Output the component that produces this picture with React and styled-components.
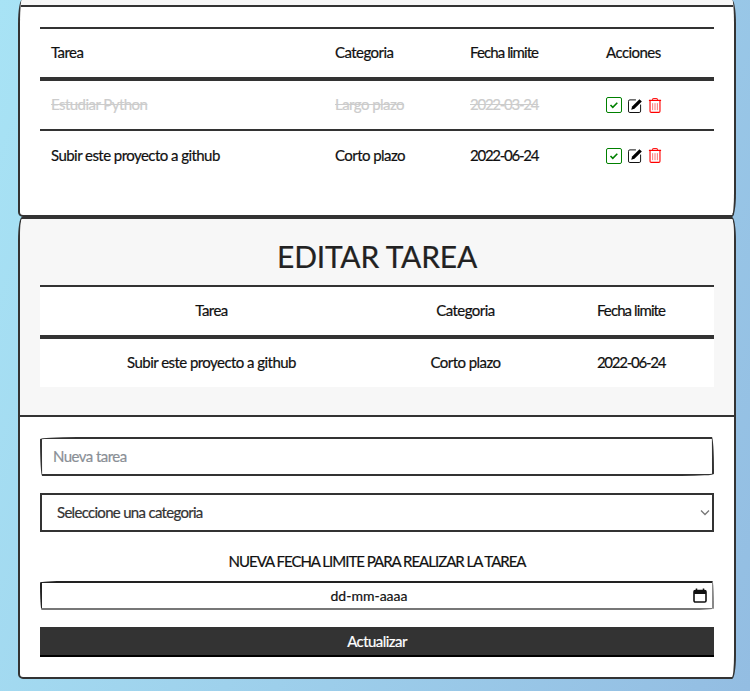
import React from "react";
import styled, { createGlobalStyle } from "styled-components";

const wobble = "255px 15px 225px 15px / 15px 225px 15px 255px";

const GlobalStyle = createGlobalStyle`
  html, body {
    margin: 0;
    height: 691px;
    overflow: hidden;
  }
  body {
    background: linear-gradient(110deg, #a8e3f5 0%, #93bde2 100%);
    font-family: "Lato", "Liberation Sans", sans-serif;
    font-size: 15px;
    letter-spacing: -0.55px;
    -webkit-text-stroke: 0.2px;
    color: #111;
  }
`;

const Page = styled.div`
  width: 718px;
  margin: 0 14px 0 18px;
`;

const Card = styled.section`
  background: #fff;
  border: 2px solid #333;
  border-top: ${(p) => (p.$flushTop ? "none" : "2px solid #333")};
  border-radius: 4px 4px 4px 5px / 24px 24px 24px 5px;
  box-sizing: border-box;
  overflow: hidden;
`;

const CardTop = styled.div`
  height: 5px;
  background: #f7f7f7;
  border-bottom: 2px solid #333;
`;

const CardHead = styled.div`
  background: #f7f7f7;
  padding: 13px 20px 28px;
  border-bottom: 2px solid #333;
`;

const Title = styled.h2`
  margin: 0 0 5px;
  font-size: 30px;
  font-weight: 400;
  letter-spacing: -0.2px;
  line-height: 48px;
  color: #222;
  text-align: center;
`;

const Body = styled.div`
  padding: 20px 20px 35px;
`;

const Table = styled.table`
  width: 100%;
  border-collapse: collapse;
  background: #fff;
  table-layout: fixed;
`;

const Th = styled.th`
  box-sizing: border-box;
  font-weight: 400;
  height: 51px;
  padding: 0 0 2px ${(p) => (p.$center ? 0 : 11)}px;
  text-align: ${(p) => (p.$center ? "center" : "left")};
  letter-spacing: ${(p) => (p.$tight ? "-0.9px" : "inherit")};
  border-top: 2px solid #333;
  border-bottom: 4px solid #333;
  width: ${(p) => (p.$w ? `${p.$w}px` : "auto")};
`;

const Td = styled.td`
  box-sizing: border-box;
  height: ${(p) => (p.$line ? 51 : 50)}px;
  padding: 0 0 ${(p) => (p.$icons ? 0 : 2)}px ${(p) => (p.$center ? 0 : 11)}px;
  text-align: ${(p) => (p.$center ? "center" : "left")};
  letter-spacing: ${(p) => (p.$tight ? "-1.25px" : "inherit")};
  border-bottom: ${(p) => (p.$line ? "2px solid #333" : "none")};
  color: ${(p) => (p.$done ? "#ccc" : "#111")};
  text-decoration: ${(p) => (p.$done ? "line-through" : "none")};
`;

const Actions = styled.div`
  display: flex;
  align-items: center;
  gap: 6px;
`;

const Form = styled.form`
  padding: 20px 20px 20px;
  display: flex;
  flex-direction: column;
`;

const TextInput = styled.input`
  height: 39px;
  box-sizing: border-box;
  border: 2px solid #333;
  border-radius: ${wobble};
  padding: 0 11px 2px;
  font: inherit;
  letter-spacing: inherit;
  outline: none;
  &::placeholder {
    color: #8a8f96;
  }
`;

const SelectWrap = styled.div`
  position: relative;
  margin-top: 17px;
  display: flex;
`;

const Select = styled.select`
  flex: 1;
  height: 39px;
  box-sizing: border-box;
  border: 2px solid #333;
  border-radius: 0;
  padding: 0 15px 2px;
  background: #fff;
  font: inherit;
  letter-spacing: -0.7px;
  color: #333;
  outline: none;
  appearance: none;
`;

const Chevron = styled.svg`
  position: absolute;
  right: 4px;
  top: 16px;
  pointer-events: none;
`;

const DateLabel = styled.label`
  margin: 20px 0 11px;
  line-height: 18px;
  letter-spacing: -1px;
  text-align: center;
  color: #111;
`;

const DateField = styled.div`
  height: 29px;
  box-sizing: border-box;
  display: flex;
  align-items: center;
  border: 2px solid #222;
  border-bottom-color: #777;
  border-right-color: #888;
  border-radius: ${wobble};
  padding: 0 5px 0 8px;
  background: #fff;
`;

const DateText = styled.span`
  flex: 1;
  padding-right: 5px;
  text-align: center;
  font-size: 14px;
  letter-spacing: 0;
`;

const Submit = styled.button`
  height: 30px;
  margin-top: 17px;
  background: #333;
  color: #fff;
  border: none;
  border-bottom: 2px solid #000;
  font: inherit;
  letter-spacing: inherit;
`;

const CheckIcon = () => (
  <svg width="16" height="16" viewBox="0 0 16 16" fill="none">
    <rect x="0.500" y="0.500" width="15" height="15" rx="1.500" stroke="green" />
    <path d="M4.500 8l2.300 2.400 4.500-4.600" stroke="green" strokeWidth="1.600" />
  </svg>
);

const EditIcon = () => (
  <svg width="14" height="15" viewBox="0 0 15 16" fill="none">
    <path d="M8.500 2H2a1.500 1.500 0 0 0-1.500 1.500v10.500a1.500 1.500 0 0 0 1.500 1.500h10a1.500 1.500 0 0 0 1.500-1.500V7" stroke="#000" />
    <path d="M3.500 12.500l.9-3.400L12.300 1.200l2.500 2.500-7.900 7.900z" fill="#000" />
  </svg>
);

const TrashIcon = () => (
  <svg width="14" height="15" viewBox="0 0 14 16" fill="none" stroke="red">
    <path d="M0.500 2.500h13" strokeWidth="1.400" />
    <path d="M4.500 2.300V1a.5.5 0 0 1 .5-.5h4a.5.5 0 0 1 .5.5v1.300" />
    <path d="M1.700 3v11a1.300 1.300 0 0 0 1.300 1.300h8a1.300 1.300 0 0 0 1.300-1.300V3" strokeWidth="1.200" />
    <path d="M4.500 5.500v7.500M7 5.500v7.500M9.500 5.500v7.500" strokeOpacity="0.600" />
  </svg>
);

const CalendarIcon = () => (
  <svg width="14" height="15" viewBox="0 0 14 15" fill="none">
    <rect x="1" y="2.500" width="12" height="11.500" rx="1.300" stroke="#111" strokeWidth="1.600" />
    <path d="M1 2.500h12V6H1z" fill="#111" />
    <path d="M3.500 0.500v2M10.500 0.500v2" stroke="#111" strokeWidth="1.500" />
  </svg>
);

const tasks = [
  { name: "Estudiar Python", cat: "Largo plazo", date: "2022-03-24", done: true },
  { name: "Subir este proyecto a github", cat: "Corto plazo", date: "2022-06-24" },
];

export default function App() {
  return (
    <Page>
      <GlobalStyle />
      <Card $flushTop>
        <CardTop />
        <Body>
          <Table>
            <thead>
              <tr>
                <Th $w={284}>Tarea</Th>
                <Th $w={135}>Categoria</Th>
                <Th $w={136} $tight>Fecha limite</Th>
                <Th>Acciones</Th>
              </tr>
            </thead>
            <tbody>
              {tasks.map((t, i) => (
                <tr key={t.name}>
                  <Td $done={t.done} $line={i === 0}>{t.name}</Td>
                  <Td $done={t.done} $line={i === 0}>{t.cat}</Td>
                  <Td $done={t.done} $line={i === 0} $tight>{t.date}</Td>
                  <Td $line={i === 0} $icons>
                    <Actions>
                      <CheckIcon />
                      <EditIcon />
                      <TrashIcon />
                    </Actions>
                  </Td>
                </tr>
              ))}
            </tbody>
          </Table>
        </Body>
      </Card>
      <Card>
        <CardHead>
          <Title>EDITAR TAREA</Title>
          <Table>
            <thead>
              <tr>
                <Th $center $w={343}>Tarea</Th>
                <Th $center $w={165}>Categoria</Th>
                <Th $center $tight>Fecha limite</Th>
              </tr>
            </thead>
            <tbody>
              <tr>
                <Td $center>Subir este proyecto a github</Td>
                <Td $center>Corto plazo</Td>
                <Td $center $tight>2022-06-24</Td>
              </tr>
            </tbody>
          </Table>
        </CardHead>
        <Form>
          <TextInput placeholder="Nueva tarea" />
          <SelectWrap>
            <Select defaultValue="">
              <option value="">Seleccione una categoria</option>
            </Select>
            <Chevron width="10" height="7" viewBox="0 0 10 7" fill="none">
              <path d="M1 1.500l4 4 4-4" stroke="#777" strokeWidth="1.300" />
            </Chevron>
          </SelectWrap>
          <DateLabel>NUEVA FECHA LIMITE PARA REALIZAR LA TAREA</DateLabel>
          <DateField>
            <DateText>dd-mm-aaaa</DateText>
            <CalendarIcon />
          </DateField>
          <Submit type="button">Actualizar</Submit>
        </Form>
      </Card>
    </Page>
  );
}
